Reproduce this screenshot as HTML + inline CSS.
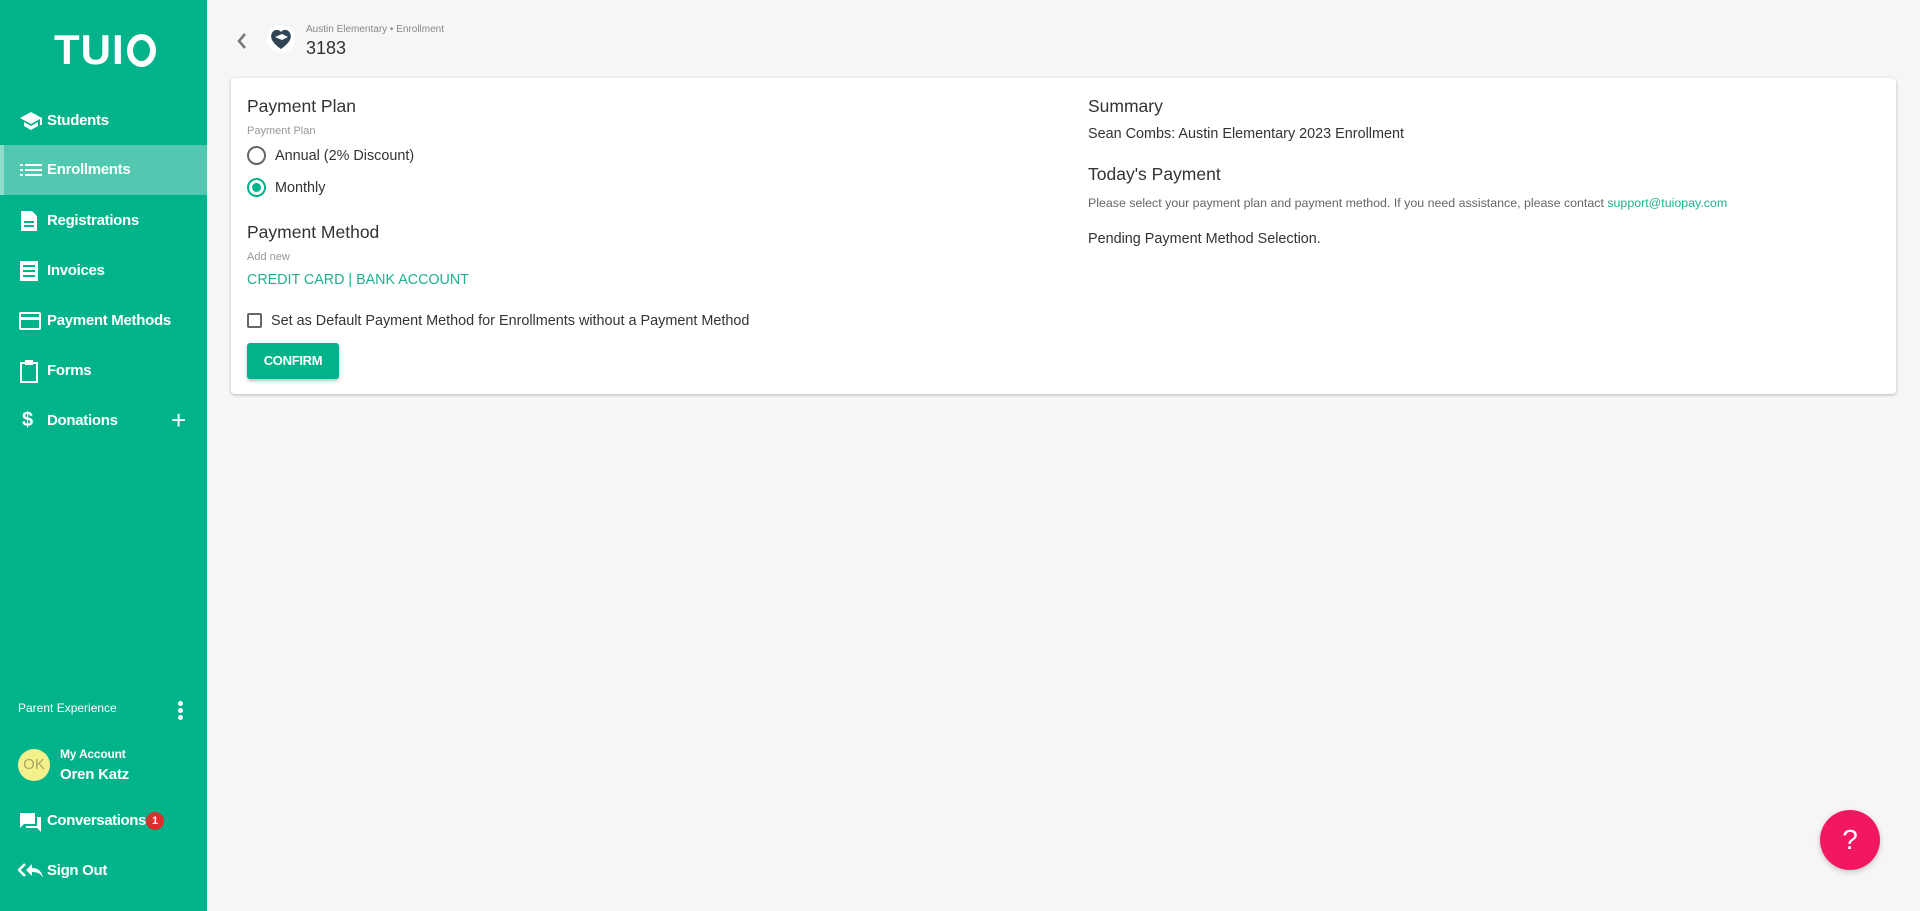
<!DOCTYPE html>
<html><head><meta charset="utf-8"><style>
*{box-sizing:border-box;margin:0;padding:0}
body{width:1920px;height:911px;background:#f6f6f6;font-family:"Liberation Sans",sans-serif;position:relative;overflow:hidden;color:#333}
.sb{position:absolute;left:0;top:0;width:207px;height:911px;background:#00b38b;color:#fff}
.logo{position:absolute;left:54px;top:26px;font-size:42px;font-weight:bold;letter-spacing:1px;color:#fff}
.nav{position:absolute;left:0;width:207px;height:50px;display:flex;align-items:center;font-size:15px;font-weight:bold;letter-spacing:-0.3px}
.nav svg{position:absolute;left:19px}
.nav span{position:absolute;left:47px;top:16px}
.act{background:#52c8b0;border-left:4px solid #8fdcca}
.abs{position:absolute}
.card{position:absolute;left:231px;top:78px;width:1665px;height:316px;background:#fff;border-radius:4px;box-shadow:0 1px 3px rgba(0,0,0,.25)}
.h{font-size:17.5px;color:#333}
.sm{font-size:11px;color:#999}
.t{font-size:14.4px;color:#333}
</style></head><body>
<div class="sb">
<div class="logo">TUI<span style="display:inline-block;width:29px;height:33px;border:6px solid #fff;border-radius:50%;vertical-align:-3px;margin-left:2px"></span></div>
<div class="nav" style="top:96px"><svg width="24" height="20" viewBox="0 0 24 20"><path d="M12 1L1 7l11 6 9-5v6h2V7z" fill="#fff"/><path d="M5 11v4l7 4 7-4v-4l-7 4z" fill="#fff"/></svg><span>Students</span></div>
<div class="nav act" style="top:145px"><svg width="22" height="16" viewBox="0 0 22 16" style="left:16px"><rect x="0" y="2" width="3" height="2" fill="#fff"/><rect x="5" y="2" width="17" height="2" fill="#fff"/><rect x="0" y="7" width="3" height="2" fill="#fff"/><rect x="5" y="7" width="17" height="2" fill="#fff"/><rect x="0" y="12" width="3" height="2" fill="#fff"/><rect x="5" y="12" width="17" height="2" fill="#fff"/></svg><span style="left:43px">Enrollments</span></div>
<div class="nav" style="top:196px"><svg width="20" height="22" viewBox="0 0 20 22"><path d="M2 1h11l5 5v15H2z" fill="#fff"/><rect x="5" y="11" width="10" height="2" fill="#00b38b"/><rect x="5" y="15" width="10" height="2" fill="#00b38b"/></svg><span>Registrations</span></div>
<div class="nav" style="top:246px"><svg width="20" height="22" viewBox="0 0 20 22"><rect x="1" y="1" width="18" height="20" fill="#fff"/><rect x="4" y="5" width="12" height="2" fill="#00b38b"/><rect x="4" y="10" width="12" height="2" fill="#00b38b"/><rect x="4" y="15" width="12" height="2" fill="#00b38b"/></svg><span>Invoices</span></div>
<div class="nav" style="top:296px"><svg width="22" height="18" viewBox="0 0 22 18"><rect x="1" y="1" width="20" height="16" rx="1" fill="none" stroke="#fff" stroke-width="2"/><rect x="1" y="5" width="20" height="3" fill="#fff"/></svg><span>Payment Methods</span></div>
<div class="nav" style="top:346px"><svg width="20" height="24" viewBox="0 0 20 24"><rect x="2" y="4" width="16" height="19" fill="none" stroke="#fff" stroke-width="2"/><rect x="6" y="1" width="8" height="5" fill="#fff"/></svg><span>Forms</span></div>
<div class="nav" style="top:396px"><span style="left:22px;top:13px;font-size:20px">$</span><span>Donations</span><span style="left:171px;top:9px;font-size:26px;font-weight:normal">+</span></div>
<div class="abs" style="left:18px;top:701px;font-size:12px">Parent Experience</div>
<div class="abs" style="left:178px;top:701px;width:5px">
<div style="width:5px;height:5px;border-radius:50%;background:#fff;margin-bottom:2px"></div><div style="width:5px;height:5px;border-radius:50%;background:#fff;margin-bottom:2px"></div><div style="width:5px;height:5px;border-radius:50%;background:#fff"></div></div>
<div class="abs" style="left:18px;top:749px;width:32px;height:32px;border-radius:50%;background:#f4f08c;color:#a8a560;font-size:15px;text-align:center;line-height:32px">OK</div>
<div class="abs" style="left:60px;top:747px;font-size:12px;font-weight:bold;letter-spacing:-0.2px">My Account</div>
<div class="abs" style="left:60px;top:766px;font-size:15px;font-weight:bold;letter-spacing:-0.2px">Oren Katz</div>
<div class="abs" style="left:19px;top:812px"><svg width="23" height="21" viewBox="0 0 23 21"><path d="M1 1h15v11H5l-4 4z" fill="#fff"/><path d="M18 5h4v15l-4-4H7v-2h11z" fill="#fff"/></svg></div>
<div class="abs" style="left:47px;top:812px;font-size:15px;font-weight:bold;letter-spacing:-0.4px">Conversations</div>
<div class="abs" style="left:146px;top:812px;width:18px;height:18px;border-radius:50%;background:#d8302c;font-size:11px;text-align:center;line-height:18px;font-weight:bold">1</div>
<div class="abs" style="left:18px;top:862px"><svg width="26" height="18" viewBox="0 0 26 18"><path d="M7 2L1 8l6 6" fill="none" stroke="#fff" stroke-width="2.5"/><path d="M14 2L8 8l6 6V10c6 0 9 2 11 6-1-6-4-10-11-10z" fill="#fff"/></svg></div>
<div class="abs" style="left:47px;top:862px;font-size:15px;font-weight:bold;letter-spacing:-0.3px">Sign Out</div>
</div>
<div class="abs" style="left:236px;top:32px"><svg width="12" height="18" viewBox="0 0 12 18"><path d="M9 2L3 9l6 7" fill="none" stroke="#777" stroke-width="2.5"/></svg></div>
<div class="abs" style="left:267px;top:25px;width:28px;height:28px;border-radius:50%;background:#fff"><svg width="28" height="28" viewBox="0 0 28 28"><path d="M14 24C4 17 3 12 5 8c2-4 7-4 9-1 2-3 7-3 9 1 2 4 1 9-9 16z" fill="#2f4556"/><path d="M8 12l7-3 6 3-6 3z" fill="#fff"/></svg></div>
<div class="abs" style="left:306px;top:24px;font-size:10px;color:#888">Austin Elementary • Enrollment</div>
<div class="abs" style="left:306px;top:38px;font-size:18px;color:#333">3183</div>
<div class="card">
<div class="abs h" style="left:16px;top:18px">Payment Plan</div>
<div class="abs sm" style="left:16px;top:47px">Payment Plan</div>
<div class="abs" style="left:16px;top:68px;width:19px;height:19px;border:2px solid #666;border-radius:50%"></div>
<div class="abs t" style="left:44px;top:70px">Annual (2% Discount)</div>
<div class="abs" style="left:16px;top:100px;width:19px;height:19px;border:2px solid #00b38b;border-radius:50%"><div style="margin:3px;width:9px;height:9px;border-radius:50%;background:#00b38b"></div></div>
<div class="abs t" style="left:44px;top:102px">Monthly</div>
<div class="abs h" style="left:16px;top:144px">Payment Method</div>
<div class="abs sm" style="left:16px;top:173px">Add new</div>
<div class="abs" style="left:16px;top:194px;font-size:14.3px;color:#1fb08f">CREDIT CARD | BANK ACCOUNT</div>
<div class="abs" style="left:16px;top:235px;width:15px;height:15px;border:2px solid #666;border-radius:2px"></div>
<div class="abs t" style="left:40px;top:235px">Set as Default Payment Method for Enrollments without a Payment Method</div>
<div class="abs" style="left:16px;top:265px;width:92px;height:36px;background:#00b38b;border-radius:3px;box-shadow:0 2px 3px rgba(0,0,0,.25);color:#fff;font-size:13px;font-weight:bold;text-align:center;line-height:36px;letter-spacing:-0.3px">CONFIRM</div>
<div class="abs h" style="left:857px;top:18px">Summary</div>
<div class="abs t" style="left:857px;top:48px">Sean Combs: Austin Elementary 2023 Enrollment</div>
<div class="abs h" style="left:857px;top:86px">Today's Payment</div>
<div class="abs" style="left:857px;top:118px;font-size:12.4px;color:#666">Please select your payment plan and payment method. If you need assistance, please contact <span style="color:#1fb08f">support@tuiopay.com</span></div>
<div class="abs t" style="left:857px;top:153px">Pending Payment Method Selection.</div>
</div>
<div class="abs" style="left:1820px;top:810px;width:60px;height:60px;border-radius:50%;background:#f1185f;box-shadow:0 2px 6px rgba(0,0,0,.2);color:#fff;font-size:28px;text-align:center;line-height:60px">?</div>
</body></html>
